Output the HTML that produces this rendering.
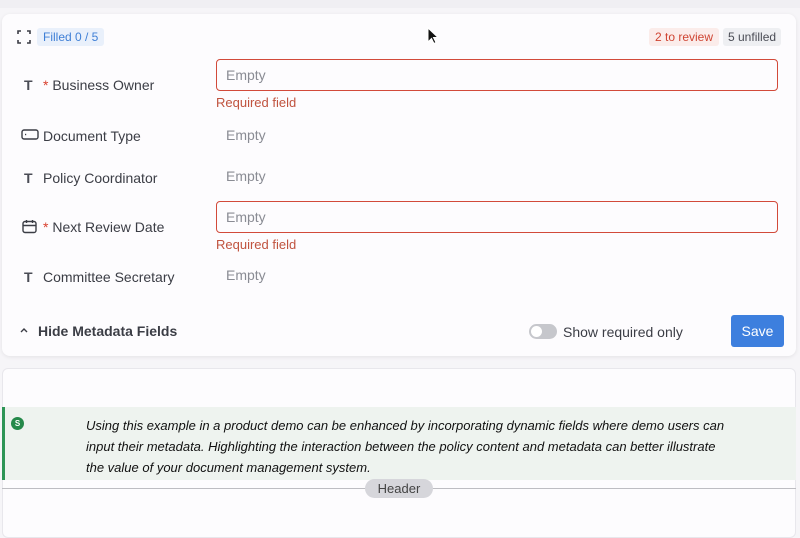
<!DOCTYPE html>
<html><head><style>
*{margin:0;padding:0;box-sizing:border-box}
body{width:800px;height:533px;background:#f6f5f8;font-family:"Liberation Sans",sans-serif;position:relative;overflow:hidden;color:#3b3d45}
.a{position:absolute}
.card{position:absolute;left:2px;top:14px;width:794px;height:342px;background:#fdfcfe;border-radius:8px;box-shadow:0 1px 4px rgba(0,0,0,.08)}
.lbl{position:absolute;font-size:14px;color:#3b3d45;white-space:nowrap}
.star{color:#d9412f}
.inp{position:absolute;left:216px;width:562px;height:32px;border:1px solid #d24a3a;border-radius:4px;font-size:14px;color:#8a8c94;padding:7px 9px}
.req{position:absolute;left:216px;font-size:13px;color:#c0533f}
.emp{position:absolute;left:226px;font-size:14px;color:#8a8c94}
.T{position:absolute;font-size:14px;font-weight:bold;color:#4a4c55}
</style></head><body>
<div class="a" style="left:0;top:0;width:800px;height:8px;background:#f0eff3"></div>
<div class="card"></div>
<svg class="a" style="left:17px;top:30px" width="14" height="14" viewBox="0 0 14 14" fill="none" stroke="#3b3d45" stroke-width="1.6"><path d="M1 4V1h3M10 1h3v3M13 10v3h-3M4 13H1v-3"/></svg>
<div class="a" style="left:37px;top:28px;height:18px;padding:0 6px;background:#e9f0fb;border-radius:3px;color:#3f7fd6;font-size:12px;line-height:18px">Filled 0 / 5</div>
<div class="a" style="left:649px;top:28px;height:18px;padding:0 6px;background:#fbecea;border-radius:3px;color:#cf4432;font-size:12px;line-height:18px">2 to review</div>
<div class="a" style="left:723px;top:28px;height:18px;padding:0 5px;background:#eeeff2;border-radius:3px;color:#4a4c55;font-size:12px;line-height:18px">5 unfilled</div>
<svg class="a" style="left:427px;top:27px" width="12" height="18" viewBox="0 0 12 18"><path d="M1 1v14l3.5-3.5 2.5 5 2-1-2.5-5H11z" fill="#111" stroke="#fff" stroke-width="1"/></svg>

<div class="T" style="left:24px;top:77px">T</div>
<div class="lbl" style="left:43px;top:77px"><span class="star">*</span> Business Owner</div>
<div class="inp" style="top:59px">Empty</div>
<div class="req" style="top:95px">Required field</div>

<svg class="a" style="left:21px;top:129px" width="18" height="11" viewBox="0 0 18 11" fill="none" stroke="#3b3d45" stroke-width="1.4"><rect x="1" y="1" width="16" height="9" rx="2"/><path d="M4 5.5h1.2"/></svg>
<div class="lbl" style="left:43px;top:128px">Document Type</div>
<div class="emp" style="top:127px">Empty</div>

<div class="T" style="left:24px;top:170px">T</div>
<div class="lbl" style="left:43px;top:170px">Policy Coordinator</div>
<div class="emp" style="top:168px">Empty</div>

<svg class="a" style="left:22px;top:219px" width="15" height="15" viewBox="0 0 15 15" fill="none" stroke="#3b3d45" stroke-width="1.4"><rect x="1" y="2.5" width="13" height="11" rx="2"/><path d="M1 6.5h13M4.5 1v3M10.5 1v3"/></svg>
<div class="lbl" style="left:43px;top:219px"><span class="star">*</span> Next Review Date</div>
<div class="inp" style="top:201px">Empty</div>
<div class="req" style="top:237px">Required field</div>

<div class="T" style="left:24px;top:269px">T</div>
<div class="lbl" style="left:43px;top:269px">Committee Secretary</div>
<div class="emp" style="top:267px">Empty</div>

<svg class="a" style="left:19px;top:327px" width="10" height="7" viewBox="0 0 10 7" fill="none" stroke="#3b3d45" stroke-width="1.4"><path d="M2 5l3-3 3 3"/></svg>
<div class="lbl" style="left:38px;top:323px;font-weight:bold;color:#3b3d45">Hide Metadata Fields</div>
<div class="a" style="left:529px;top:324px;width:28px;height:15px;border-radius:8px;background:#c6c7cc"></div>
<div class="a" style="left:531px;top:326px;width:11px;height:11px;border-radius:50%;background:#fff"></div>
<div class="lbl" style="left:563px;top:324px">Show required only</div>
<div class="a" style="left:731px;top:315px;width:53px;height:32px;background:#3d7fde;border-radius:3px;color:#fff;font-size:14px;text-align:center;line-height:32px">Save</div>

<div class="a" style="left:2px;top:368px;width:794px;height:170px;background:#fdfcfe;border-radius:6px;border:1px solid #e8e7ec"></div>
<div class="a" style="left:2px;top:407px;width:794px;height:73px;background:#eef3ef;border-left:3px solid #2e9556"></div>
<div class="a" style="left:11px;top:417px;width:13px;height:13px;border-radius:50%;background:#25894a;color:#fff;font-size:8px;text-align:center;line-height:13px;font-weight:bold">S</div>
<div class="a" style="left:86px;top:415px;width:645px;font-size:13px;line-height:21px;font-style:italic;color:#111">Using this example in a product demo can be enhanced by incorporating dynamic fields where demo users can input their metadata. Highlighting the interaction between the policy content and metadata can better illustrate the value of your document management system.</div>
<div class="a" style="left:2px;top:488px;width:794px;height:1px;background:#bdbdc2"></div>
<div class="a" style="left:365px;top:479px;width:68px;height:19px;border-radius:10px;background:#d6d6db;color:#444;font-size:13px;text-align:center;line-height:19px">Header</div>
</body></html>
